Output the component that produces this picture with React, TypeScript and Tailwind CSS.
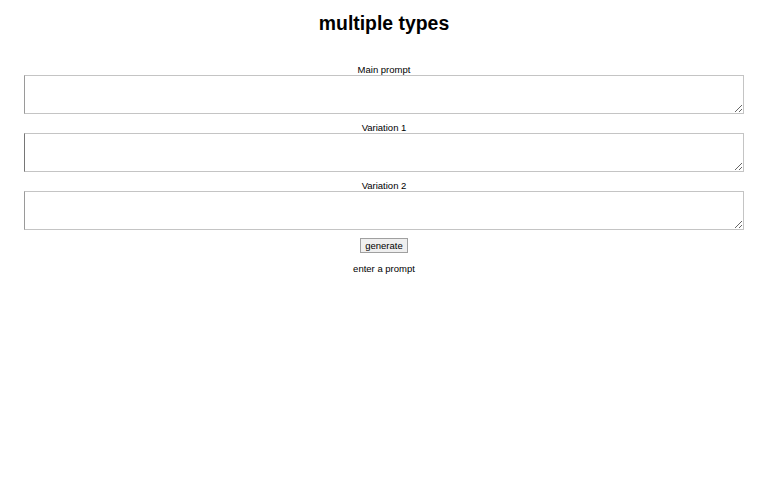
import { useState } from "react";

const fields = ["Main prompt", "Variation 1", "Variation 2"];

export default function App() {
  const [values, setValues] = useState<string[]>(["", "", ""]);

  return (
    <div className="min-h-screen bg-white text-black font-['Liberation_Sans',Arial,sans-serif]">
      <h1 className="pt-[12px] text-center text-[19.4px] font-bold leading-[23px]">multiple types</h1>
      <div className="mt-[29px] flex flex-col px-[24px]">
        {fields.map((label, i) => (
          <div key={label} className="flex flex-col items-center">
            <label className="text-[9.5px] leading-[11px]">{label}</label>
            <textarea
              value={values[i]}
              onChange={(e) => setValues(values.map((v, j) => (j === i ? e.target.value : v)))}
              className={`h-[39px] w-full resize-y bg-white border border-t-[#c4c4c4] border-r-[#c4c4c4] border-b-[#c4c4c4] border-l-[#9a9a9a] ${
                i === 1 ? "border-[#767676] border-t-[#767676] border-r-[#767676] border-b-[#767676] border-l-[#767676]" : ""
              } ${i < 2 ? "mb-[8px]" : ""}`}
            />
          </div>
        ))}
        <div className="mt-[8px] flex justify-center">
          <button className="h-[15px] w-[48px] border border-[#a0a0a0] bg-[#efefef] text-[9.5px] leading-[13px]">
            generate
          </button>
        </div>
        <p className="mt-[10px] text-center text-[9.5px] leading-[12px]">enter a prompt</p>
      </div>
    </div>
  );
}
